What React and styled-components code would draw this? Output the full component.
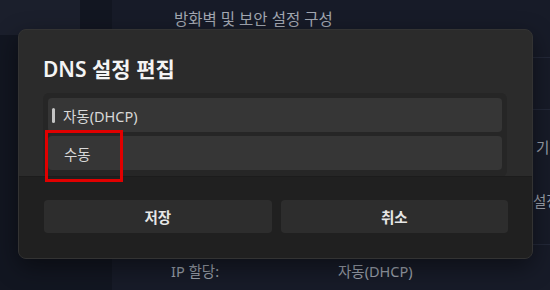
import React from 'react';
import styled, { createGlobalStyle } from 'styled-components';

const GlobalStyle = createGlobalStyle`
    html, body {
        margin: 0;
        padding: 0;
        background: #151925;
    }
    body {
        font-family: "Noto Sans", "Noto Sans CJK KR", sans-serif;
    }
`;

const Page = styled.div`
    position: relative;
    width: 550px;
    height: 290px;
    display: flex;
    overflow: hidden;
    background: #151925;
`;

const Sidebar = styled.div`
    width: 112px;
    display: flex;
    flex-direction: column;
    background: #121621;
`;

const SidebarTop = styled.div`
    width: 80px;
    height: 35px;
    background: #1b1f2c;
`;

const Main = styled.div`
    flex: 1;
    min-width: 0;
    display: flex;
    flex-direction: column;
    background: #171b28;
    color: #9ca1ac;
    font-size: 14.5px;
`;

const Header = styled.div`
    height: 36px;
    display: flex;
    align-items: center;
    padding-left: 62px;
    font-size: 15.5px;
    color: #a3a8b2;
`;

const Row = styled.div`
    height: ${(p) => p.h}px;
    box-sizing: border-box;
    display: grid;
    grid-template-columns: 167px 195px 1fr;
    align-items: center;
    padding-left: 59px;
    padding-top: ${(p) => p.pt || 0}px;
    border-bottom: ${(p) => (p.line ? '1px solid #232838' : 'none')};
    white-space: nowrap;
    overflow: hidden;
`;

const Cell = styled.span`
    margin-left: ${(p) => p.shift || 0}px;
`;

const Dialog = styled.div`
    position: absolute;
    left: 18px;
    top: 29px;
    width: 515px;
    height: 230px;
    display: flex;
    flex-direction: column;
    background: #2b2b2b;
    border: 1px solid #333;
    box-sizing: border-box;
    border-radius: 8px;
    overflow: hidden;
    box-shadow: 0 8px 24px rgba(0, 0, 0, 0.45);
`;

const Body = styled.div`
    height: 146px;
    box-sizing: border-box;
    padding: 25px 25px 0 24px;
    display: flex;
    flex-direction: column;
`;

const Title = styled.h2`
    margin: 0;
    font-size: 21px;
    line-height: 28px;
    font-weight: 600;
    color: #f4f4f4;
`;

const List = styled.div`
    margin-top: 10px;
    height: 84px;
    box-sizing: border-box;
    padding: 5px 5px 7px;
    display: flex;
    flex-direction: column;
    gap: 4px;
    background: #262626;
    border-radius: 6px;
`;

const Item = styled.div`
    position: relative;
    height: 34px;
    display: flex;
    align-items: center;
    padding-left: ${(p) => (p.selected ? 4 : 16)}px;
    gap: 8px;
    background: #363636;
    border-radius: 4px;
    font-size: 14.5px;
    color: #d8d8d8;
`;

const Indicator = styled.span`
    width: 3px;
    height: 15px;
    border-radius: 2px;
    background: #c4c4c4;
`;

const Highlight = styled.span`
    position: absolute;
    left: -3px;
    top: -6px;
    width: 78px;
    height: 52px;
    box-sizing: border-box;
    border: 3px solid #e10000;
`;

const Footer = styled.div`
    flex: 1;
    display: grid;
    grid-template-columns: 1fr 1fr;
    gap: 9px;
    align-items: start;
    padding: 23px 24px 0 25px;
    background: #202020;
    border-top: 1px solid #1c1c1c;
`;

const Button = styled.button`
    height: 33px;
    border: none;
    border-radius: 4px;
    background: #2d2d2d;
    color: #e6e6e6;
    font-family: inherit;
    font-size: 14.5px;
    font-weight: 600;
`;

export default function App() {
    return (
        <>
            <GlobalStyle />
            <Page>
                <Sidebar>
                    <SidebarTop />
                </Sidebar>
                <Main>
                    <Header>방화벽 및 보안 설정 구성</Header>
                    <Row h={22} line />
                    <Row h={52} line />
                    <Row h={72}>
                        <Cell />
                        <Cell />
                        <Cell shift={3}>기</Cell>
                    </Row>
                    <Row h={36}>
                        <Cell />
                        <Cell />
                        <Cell>설정</Cell>
                    </Row>
                    <Row h={27} line />
                    <Row h={45} pt={6}>
                        <Cell>IP 할당:</Cell>
                        <Cell>자동(DHCP)</Cell>
                    </Row>
                </Main>
                <Dialog>
                    <Body>
                        <Title>DNS 설정 편집</Title>
                        <List>
                            <Item selected>
                                <Indicator />
                                자동(DHCP)
                            </Item>
                            <Item>
                                수동
                                <Highlight />
                            </Item>
                        </List>
                    </Body>
                    <Footer>
                        <Button>저장</Button>
                        <Button>취소</Button>
                    </Footer>
                </Dialog>
            </Page>
        </>
    );
}
